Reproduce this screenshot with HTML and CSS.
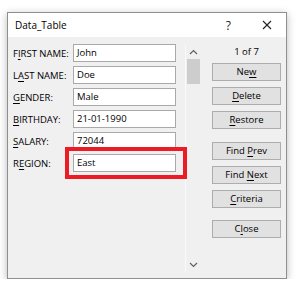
FILE: index.html
```html
<!DOCTYPE html>
<html>
<head>
<meta charset="utf-8">
<link rel="stylesheet" href="styles.css">
</head>
<body>
<div class="dialog">
  <div class="titlebar">
    <span class="title">Data_Table</span>
    <span class="help">?</span>
    <svg class="close-x" width="10" height="10" viewBox="0 0 10 10"><path d="M1 1L9 9M9 1L1 9" stroke="#222" stroke-width="1.1" fill="none"/></svg>
  </div>
  <div class="body">
    <div class="fields">
      <div class="row"><label class="lbl">F<u>I</u>RST NAME:</label><div class="input">John</div></div>
      <div class="row"><label class="lbl">L<u>A</u>ST NAME:</label><div class="input">Doe</div></div>
      <div class="row"><label class="lbl"><u>G</u>ENDER:</label><div class="input">Male</div></div>
      <div class="row"><label class="lbl"><u>B</u>IRTHDAY:</label><div class="input">21-01-1990</div></div>
      <div class="row"><label class="lbl"><u>S</u>ALARY:</label><div class="input">72044</div></div>
      <div class="row"><label class="lbl">R<u>E</u>GION:</label><div class="input hl-wrap">East<span class="highlight"></span></div></div>
    </div>
    <div class="scroll">
      <svg class="arrow" width="9" height="6" viewBox="0 0 9 6"><path d="M1 5L4.5 1.5L8 5" stroke="#606060" stroke-width="1.2" fill="none"/></svg>
      <div class="thumb"></div>
      <div class="track"></div>
      <svg class="arrow" width="9" height="6" viewBox="0 0 9 6"><path d="M1 1L4.5 4.5L8 1" stroke="#606060" stroke-width="1.2" fill="none"/></svg>
    </div>
    <div class="buttons">
      <div class="count">1 of 7</div>
      <div class="btn first">Ne<u>w</u></div>
      <div class="btn"><u>D</u>elete</div>
      <div class="btn"><u>R</u>estore</div>
      <div class="btn group">Find <u>P</u>rev</div>
      <div class="btn">Find <u>N</u>ext</div>
      <div class="btn"><u>C</u>riteria</div>
      <div class="btn group2">C<u>l</u>ose</div>
    </div>
  </div>
</div>
</body>
</html>
```
FILE: styles.css
```css
html, body {
  margin: 0;
  padding: 0;
  background: #ffffff;
}
body {
  font-family: "Open Sans", "Noto Sans", sans-serif;
  font-size: 9.5px;
  color: #000;
}
.dialog {
  margin: 12px 0 0 7px;
  width: 278px;
  height: 265px;
  border: 1px solid #8f8f8f;
  background: #f0f0f0;
  box-shadow: 0 2px 8px rgba(0,0,0,0.28);
  display: flex;
  flex-direction: column;
}
.titlebar {
  height: 24px;
  background: #fff;
  display: flex;
  align-items: center;
  flex: none;
}
.title {
  font-size: 10px;
  margin-left: 7px;
  flex: 1;
}
.help {
  font-size: 12px;
  margin-right: 31px;
  color: #222;
}
.close-x {
  margin-right: 14px;
}
.body {
  display: flex;
  flex: 1;
}
.fields {
  padding: 7px 0 0 5px;
  width: 163px;
  display: flex;
  flex-direction: column;
  gap: 4px;
}
.row {
  display: flex;
  align-items: center;
  height: 18px;
}
.lbl {
  width: 60px;
  flex: none;
  font-size: 9.5px;
}
u {
  text-decoration-thickness: 1px;
  text-underline-offset: 1.5px;
}
.input {
  width: 99px;
  height: 16px;
  border: 1px solid #a9a9a9;
  background: #fff;
  padding-left: 3px;
  line-height: 16px;
  font-size: 9.5px;
}
.hl-wrap {
  position: relative;
}
.highlight {
  position: absolute;
  left: -9px;
  top: -8px;
  width: 114px;
  height: 24px;
  border: 4px solid #ed1c24;
}
.scroll {
  margin: 8px 0 0 9px;
  width: 14px;
  height: 227px;
  border-left: 1px solid #fafafa;
  display: flex;
  flex-direction: column;
  align-items: center;
}
.arrow {
  margin-top: 4px;
  flex: none;
}
.arrow:last-child {
  margin: 0 0 4px 0;
}
.thumb {
  margin-top: 4px;
  width: 13px;
  height: 25px;
  background: #cdcdcd;
  flex: none;
}
.track {
  flex: 1;
}
.buttons {
  margin-left: 12px;
  width: 69px;
  padding-top: 8px;
  display: flex;
  flex-direction: column;
}
.count {
  height: 14px;
  line-height: 14px;
  text-align: center;
  font-size: 9.5px;
}
.btn {
  height: 16px;
  border: 1px solid #adadad;
  background: #e1e1e1;
  text-align: center;
  line-height: 16px;
  margin-top: 6px;
  font-size: 9.5px;
}
.btn.first {
  margin-top: 4px;
}
.btn.group {
  margin-top: 13px;
}
.btn.group2 {
  margin-top: 12px;
}
```
